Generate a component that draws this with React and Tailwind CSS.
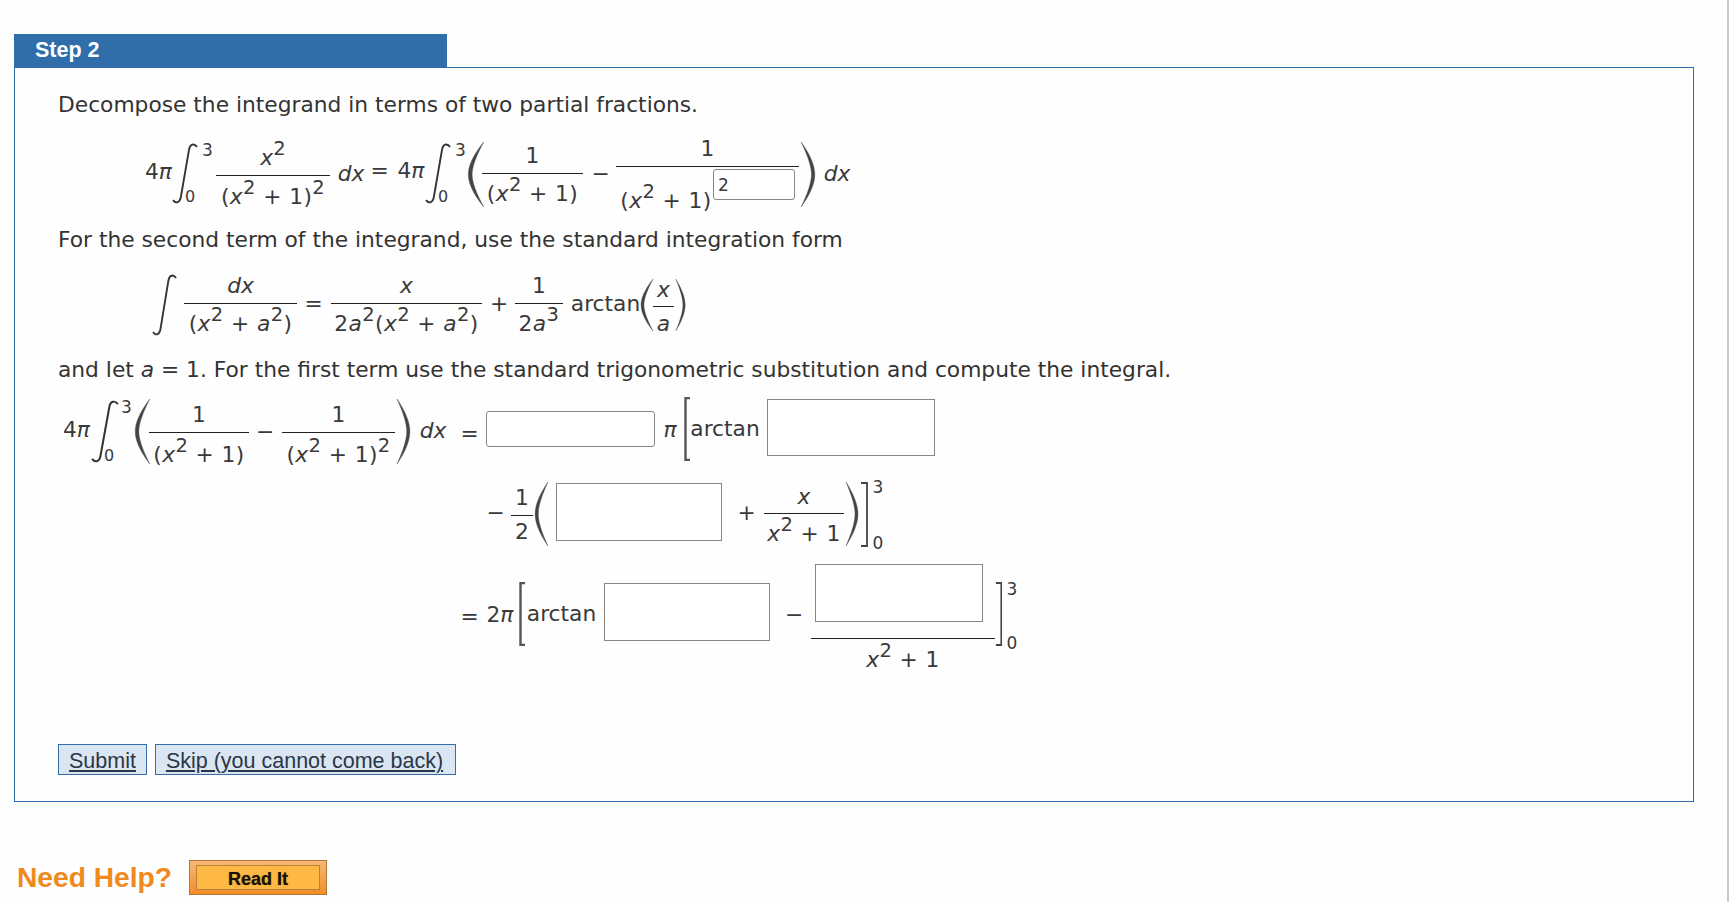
import React from 'react';

const sans = "[font-family:'Liberation_Sans',Arial,sans-serif]";

const Txt = ({ className = '', children }) => (
  <div className={`flex h-[30px] shrink-0 items-center justify-center whitespace-nowrap ${className}`}>
    {children}
  </div>
);

const V = ({ children }) => <i>{children}</i>;
const Sup = ({ children }) => <sup className="text-[19.5px]">{children}</sup>;

const Frac = ({ className = '', numClass = '', denClass = '', num, den }) => (
  <div className={`flex shrink-0 flex-col ${className}`}>
    <div className={`flex items-center justify-center whitespace-nowrap border-b border-[#222] ${numClass}`}>
      {num}
    </div>
    <div className={`flex items-center justify-center whitespace-nowrap pt-[2px] tracking-[0.4px] ${denClass}`}>{den}</div>
  </div>
);

const Integral = ({ className = '', upper, lower }) => (
  <div className={`relative shrink-0 ${className}`}>
    <svg viewBox="0 0 26 62" preserveAspectRatio="none" className="h-full w-full">
      <path d="M25 4 C22 0 18 1 17 7 L9 54 C8 61 4 62 1 58" fill="none" stroke="#333" strokeWidth="1.9" />
    </svg>
    {upper && <span className="absolute left-[30px] top-[-3px] text-[17px] leading-5">{upper}</span>}
    {lower && <span className="absolute bottom-[-3px] left-[13px] text-[16px] leading-5">{lower}</span>}
  </div>
);

const Paren = ({ className = '', flip = false }) => (
  <svg
    viewBox="0 0 14 63"
    preserveAspectRatio="none"
    className={`shrink-0 ${flip ? '-scale-x-100' : ''} ${className}`}
  >
    <path d="M13 0 C4 14 1 24 1 31.5 C1 39 4 49 13 63 C7 49 4 39 4 31.5 C4 24 7 14 13 0 Z" fill="#444" stroke="#555" strokeWidth="0.4" />
  </svg>
);

const LBracket = ({ className = '' }) => (
  <svg viewBox="0 0 7 64" preserveAspectRatio="none" className={`shrink-0 ${className}`}>
    <path d="M6 1 H1.5 V63 H6" fill="none" stroke="#555" strokeWidth="2.4" />
  </svg>
);

const RBracket = ({ className = '' }) => (
  <svg viewBox="0 0 9 64" preserveAspectRatio="none" className={`shrink-0 ${className}`}>
    <path d="M1 1 H7 V63 H1" fill="none" stroke="#444" strokeWidth="1.8" />
  </svg>
);

const Limits = ({ className = '' }) => (
  <div className={`flex shrink-0 flex-col justify-between text-center text-[17px] leading-5 ${className}`}>
    <span>3</span>
    <span>0</span>
  </div>
);

const Box = ({ className = '', value }) => (
  <input
    readOnly
    defaultValue={value}
    className={`shrink-0 border border-[#868686] bg-white outline-none ${className}`}
  />
);

export default function App() {
  return (
    <div className="h-[902px] w-full overflow-hidden bg-[#fefefe]">
      <main className={`h-full w-[1729px] border-r-2 border-[#c9c9c9] pl-[14px] pt-[34px] text-[#3a3a3a] [font-family:'DejaVu_Sans',sans-serif] text-[21.75px]`}>
        <div className={`flex h-[33px] w-[433px] items-center bg-[#2f6eaa] pl-[21px] text-[21.5px] font-bold text-white ${sans}`}>
          Step 2
        </div>

        <section className="w-[1680px] border border-[#2f6eaa] pb-[26px] pl-[44px] pt-[22px]">
          <p className="ml-[-1px] h-[30px] leading-[30px] text-[#333]">Decompose the integrand in terms of two partial fractions.</p>

          {/* first decomposition */}
          <div className="mt-[11px] flex h-[82px] items-start">
            <Txt className="ml-[86px] mt-[26px] w-[27px]">4<V>π</V></Txt>
            <Integral className="mt-[12px] h-[61px] w-[26px]" upper="3" lower="0" />
            <Frac
              className="ml-[18px] mt-[5px] w-[114px]"
              numClass="h-[40px] pt-[5px]"
              denClass="h-[40px]"
              num={<span><V>x</V><Sup>2</Sup></span>}
              den={<span>(<V>x</V><Sup>2</Sup> + 1)<Sup>2</Sup></span>}
            />
            <Txt className="ml-[9px] mt-[28px] w-[24px]"><V>dx</V></Txt>
            <Txt className="ml-[10px] mt-[25px] w-[13px]">=</Txt>
            <Txt className="ml-[11px] mt-[25px] w-[28px]">4<V>π</V></Txt>
            <Integral className="mt-[12px] h-[61px] w-[26px]" upper="3" lower="0" />
            <Paren className="ml-[16px] mt-[11px] h-[65px] w-[18px]" />
            <Frac
              className="ml-[-3px] mt-[7px] w-[101px]"
              numClass="h-[36px] pt-[2px]"
              denClass="h-[38px]"
              num="1"
              den={<span>(<V>x</V><Sup>2</Sup> + 1)</span>}
            />
            <Txt className="ml-[11px] mt-[28px] w-[13px]">−</Txt>
            <Frac
              className="ml-[9px] w-[183px]"
              numClass="h-[36px] pt-[2px]"
              denClass="!items-start !justify-start !pt-0 h-[45px] pl-[3px]"
              num="1"
              den={
                <>
                  <Txt className="mt-[19px] w-[94px]">
                    <span>(<V>x</V><Sup>2</Sup> + 1)</span>
                  </Txt>
                  <Box value="2" className="mt-[2px] h-[31px] w-[82px] rounded-[3px] pl-[4px] text-[17px]" />
                </>
              }
            />
            <Paren flip className="ml-[1px] mt-[11px] h-[65px] w-[16px]" />
            <Txt className="ml-[8px] mt-[28px] w-[26px]"><V>dx</V></Txt>
          </div>

          <p className="ml-[-1px] mt-[12px] h-[30px] leading-[30px] text-[#333]">For the second term of the integrand, use the standard integration form</p>

          {/* standard form */}
          <div className="mt-[14px] flex h-[70px] items-start">
            <Integral className="ml-[93px] mt-[5px] h-[62px] w-[25px]" />
            <Frac
              className="ml-[7px] mt-[1px] w-[113px]"
              numClass="h-[34px]"
              denClass="h-[38px]"
              num={<V>dx</V>}
              den={<span>(<V>x</V><Sup>2</Sup> + <V>a</V><Sup>2</Sup>)</span>}
            />
            <Txt className="ml-[10px] mt-[20px] w-[13px]">=</Txt>
            <Frac
              className="ml-[11px] mt-[1px] w-[151px]"
              numClass="h-[34px]"
              denClass="h-[38px]"
              num={<V>x</V>}
              den={<span>2<V>a</V><Sup>2</Sup>(<V>x</V><Sup>2</Sup> + <V>a</V><Sup>2</Sup>)</span>}
            />
            <Txt className="ml-[10px] mt-[20px] w-[14px]">+</Txt>
            <Frac
              className="ml-[9px] mt-[1px] w-[48px]"
              numClass="h-[34px]"
              denClass="h-[38px]"
              num="1"
              den={<span>2<V>a</V><Sup>3</Sup></span>}
            />
            <Txt className="ml-[9px] mt-[20px] w-[67px]">arctan</Txt>
            <Paren className="ml-[1px] mt-[10px] h-[52px] w-[14px]" />
            <Frac
              className="ml-[-1px] mt-[6px] w-[21px]"
              numClass="h-[32px]"
              denClass="h-[32px]"
              num={<V>x</V>}
              den={<V>a</V>}
            />
            <Paren flip className="ml-[1px] mt-[10px] h-[52px] w-[11px]" />
          </div>

          <p className="ml-[-1px] mt-[16px] h-[30px] leading-[30px] text-[#333]">
            and let <V>a</V> = 1. For the first term use the standard trigonometric substitution and compute the integral.
          </p>

          {/* worked integral */}
          <div className="mt-[12px] flex h-[64px] items-start">
            <Txt className="ml-[3px] mt-[18px] w-[29px]">4<V>π</V></Txt>
            <Integral className="mt-[3px] h-[63px] w-[28px]" upper="3" lower="0" />
            <Paren className="ml-[15px] mt-[2px] h-[65px] w-[17px]" />
            <Frac
              className="ml-[-2px] w-[100px]"
              numClass="h-[36px] pt-[2px]"
              denClass="h-[42px]"
              num="1"
              den={<span>(<V>x</V><Sup>2</Sup> + 1)</span>}
            />
            <Txt className="ml-[9px] mt-[20px] w-[14px]">−</Txt>
            <Frac
              className="ml-[10px] w-[113px]"
              numClass="h-[36px] pt-[2px]"
              denClass="h-[42px]"
              num="1"
              den={<span>(<V>x</V><Sup>2</Sup> + 1)<Sup>2</Sup></span>}
            />
            <Paren flip className="ml-[1px] mt-[2px] h-[65px] w-[15px]" />
            <Txt className="ml-[9px] mt-[19px] w-[26px]"><V>dx</V></Txt>
            <Txt className="ml-[16px] mt-[22px] w-[15px]">=</Txt>
            <Box className="ml-[9px] mt-[14px] h-[36px] w-[169px] rounded-[3px]" />
            <Txt className="ml-[8px] mt-[18px] w-[14px]"><V>π</V></Txt>
            <LBracket className="ml-[7px] h-[64px] w-[7px]" />
            <Txt className="mt-[17px] w-[68px]">arctan</Txt>
            <Box className="ml-[8px] mt-[2px] h-[57px] w-[168px]" />
          </div>

          <div className="mt-[20px] flex h-[64px] items-start">
            <Txt className="ml-[430px] mt-[17px] w-[13px]">−</Txt>
            <Frac
              className="ml-[9px] mt-[1px] w-[22px]"
              numClass="h-[34px]"
              denClass="!pt-0 h-[32px]"
              num="1"
              den="2"
            />
            <Paren className="ml-[1px] mt-[1px] h-[64px] w-[15px]" />
            <Box className="ml-[7px] mt-[2px] h-[58px] w-[166px]" />
            <Txt className="ml-[17px] mt-[17px] w-[15px]">+</Txt>
            <Frac
              className="ml-[10px] mt-[1px] w-[80px]"
              numClass="h-[32px]"
              denClass="h-[38px]"
              num={<V>x</V>}
              den={<span><V>x</V><Sup>2</Sup> + 1</span>}
            />
            <Paren flip className="ml-[1px] mt-[1px] h-[64px] w-[14px]" />
            <RBracket className="ml-[1px] mt-[1px] h-[65px] w-[9px]" />
            <Limits className="ml-[2px] mt-[-4px] h-[76px] w-[14px]" />
          </div>

          <div className="mt-[16px] flex h-[108px] items-start">
            <Txt className="ml-[403px] mt-[41px] w-[15px]">=</Txt>
            <Txt className="ml-[9px] mt-[39px] w-[28px]">2<V>π</V></Txt>
            <LBracket className="ml-[5px] mt-[21px] h-[64px] w-[7px]" />
            <Txt className="ml-[2px] mt-[38px] w-[67px]">arctan</Txt>
            <Box className="ml-[9px] mt-[22px] h-[58px] w-[166px]" />
            <Txt className="ml-[17px] mt-[39px] w-[14px]">−</Txt>
            <Frac
              className="ml-[10px] w-[184px]"
              numClass="!items-start !justify-start h-[78px] pl-[4px] pt-[3px]"
              denClass="h-[40px]"
              num={<Box className="h-[58px] w-[168px]" />}
              den={<span><V>x</V><Sup>2</Sup> + 1</span>}
            />
            <RBracket className="mt-[21px] h-[64px] w-[8px]" />
            <Limits className="ml-[2px] mt-[18px] h-[74px] w-[14px]" />
          </div>

          <div className={`ml-[-1px] mt-[75px] flex gap-[8px] text-[21.5px] text-[#2b3648] ${sans}`}>
            <button className="h-[31px] w-[89px] border border-[#336ea9] bg-[#dae6f1] pb-[3px] underline decoration-2 underline-offset-2">
              Submit
            </button>
            <button className="h-[31px] w-[301px] border border-[#336ea9] bg-[#dae6f1] pb-[3px] pr-[2px] underline decoration-2 underline-offset-2">
              Skip (you cannot come back)
            </button>
          </div>
        </section>

        <div className={`mt-[58px] flex h-[35px] items-center ${sans}`}>
          <span className="ml-[3px] text-[28.2px] font-bold text-[#f08a1d]">Need Help?</span>
          <div className="ml-[17px] flex h-[35px] w-[138px] items-center justify-center border border-[#b0763a] bg-gradient-to-b from-[#f6b873] to-[#f38d22]">
            <button className="h-[25px] w-[124px] border border-[#b8803a] bg-[#fdb944] text-[18px] font-bold text-[#1a1209] [text-shadow:0_0_1px_#7a5a10]">
              Read It
            </button>
          </div>
        </div>
      </main>
    </div>
  );
}
